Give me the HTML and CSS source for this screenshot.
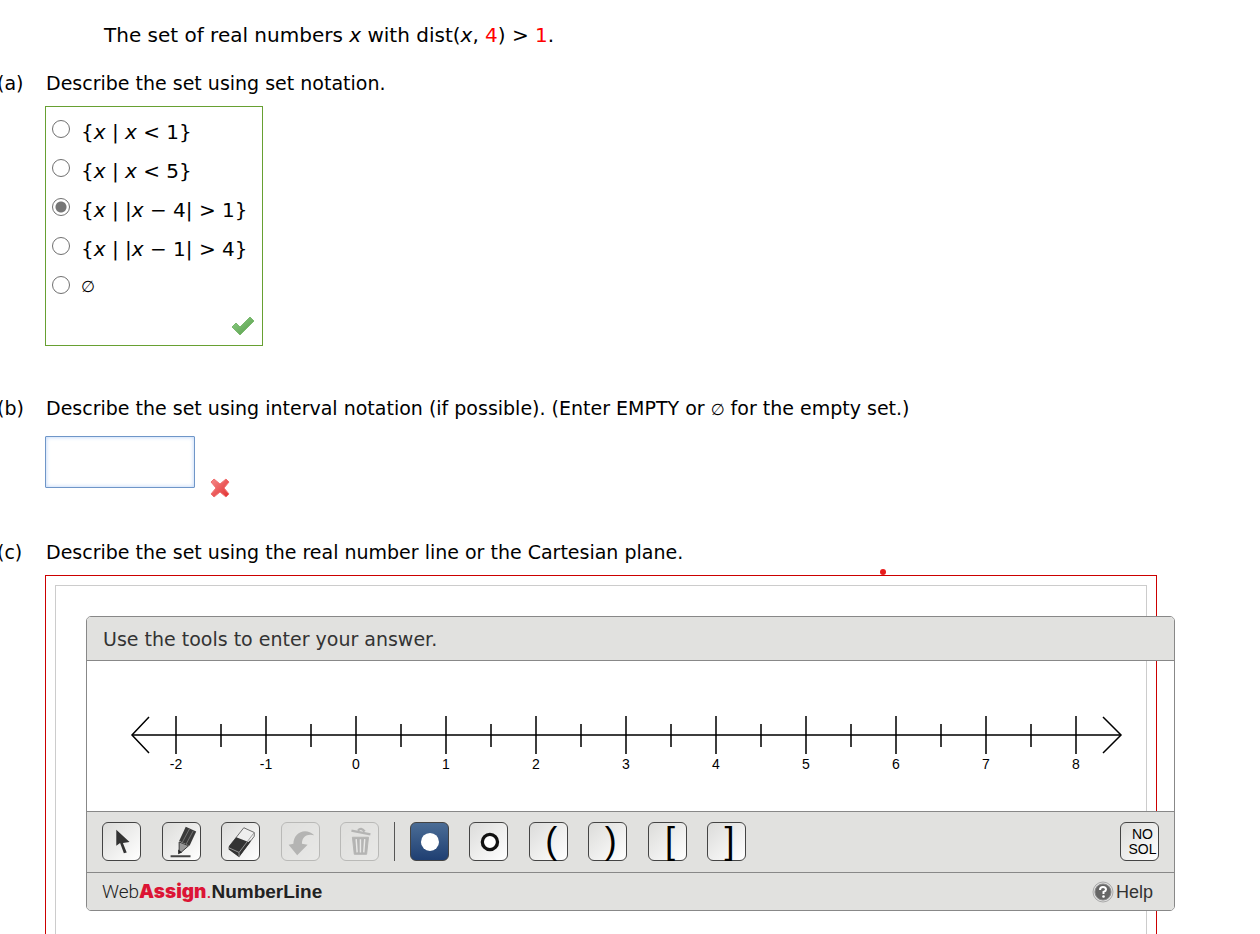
FILE: index.html
```html
<!DOCTYPE html>
<html lang="en">

<head>
    <meta charset="UTF-8">
    <title>WebAssign</title>
    <link rel="stylesheet" href="styles.css">
</head>

<body>
    <p class="intro">The set of real numbers <i>x</i> with dist(<i>x</i>, <span class="red">4</span>) &gt; <span class="red">1</span>.</p>

    <section class="part part-a">
        <span class="letter">(a)</span>
        <div class="content">
            <p id="askA">Describe the set using set notation.</p>
            <div class="choices" role="radiogroup" aria-labelledby="askA">
                <label><input type="radio" name="set"><span>{<i>x</i> | <i>x</i> &lt; 1}</span></label>
                <label><input type="radio" name="set"><span>{<i>x</i> | <i>x</i> &lt; 5}</span></label>
                <label><input type="radio" name="set" checked><span>{<i>x</i> | |<i>x</i> − 4| &gt; 1}</span></label>
                <label><input type="radio" name="set"><span>{<i>x</i> | |<i>x</i> − 1| &gt; 4}</span></label>
                <label class="empty"><input type="radio" name="set"><span class="null">∅</span></label>
                <svg class="check" width="24" height="20" viewBox="0 0 24 20">
                    <defs>
                        <linearGradient id="green" x1="0" y1="0" x2="1" y2="1">
                            <stop offset="0" stop-color="#8fd08a"/>
                            <stop offset="1" stop-color="#559a45"/>
                        </linearGradient>
                    </defs>
                    <path d="M1 11 L5 7 L9 11 L19 1 L23 5 L9 19 Z" fill="url(#green)" stroke="#7ab86e" stroke-linejoin="round"/>
                </svg>
            </div>
        </div>
    </section>

    <section class="part part-b">
        <span class="letter">(b)</span>
        <div class="content">
            <label for="interval">Describe the set using interval notation (if possible). (Enter EMPTY or <span class="null">∅</span> for the empty set.)</label>
            <div class="answer">
                <input type="text" id="interval">
                <svg width="20" height="20" viewBox="0 0 20 20">
                    <defs>
                        <linearGradient id="redfill" x1="0" y1="0" x2="1" y2="1">
                            <stop offset="0" stop-color="#f58a8a"/>
                            <stop offset="1" stop-color="#e23030"/>
                        </linearGradient>
                    </defs>
                    <path d="M4 1 L10 6 L16 1 L19 4 L14 10 L19 16 L16 19 L10 14 L4 19 L1 16 L6 10 L1 4 Z" fill="url(#redfill)" stroke="#f07070" stroke-linejoin="round"/>
                </svg>
            </div>
        </div>
    </section>

    <section class="part part-c">
        <span class="letter">(c)</span>
        <div class="content">
            <p>Describe the set using the real number line or the Cartesian plane.</p>
            <div class="wrong">
                <span class="dot"></span>
                <div class="frame">
                    <div class="numberline">
                        <div class="head">Use the tools to enter your answer.</div>
                        <svg class="graph" viewBox="0 0 1087 150">
                            <g stroke="#000" stroke-opacity="0.76" stroke-width="2" fill="none">
                                <path d="M45 74 H1034"/>
                                <path d="M89 55 V93 M179 55 V93 M269 55 V93 M359 55 V93 M449 55 V93 M539 55 V93 M629 55 V93 M719 55 V93 M809 55 V93 M899 55 V93 M989 55 V93"/>
                                <path d="M134 63 V86 M224 63 V86 M314 63 V86 M404 63 V86 M494 63 V86 M584 63 V86 M674 63 V86 M764 63 V86 M854 63 V86 M944 63 V86"/>
                            </g>
                            <path d="M62 56 L45 74 L62 92 M1016 56 L1034 74 L1016 92" stroke="#000" stroke-width="1.5" fill="none"/>
                            <g class="ticks">
                                <text x="89" y="108">-2</text>
                                <text x="179" y="108">-1</text>
                                <text x="269" y="108">0</text>
                                <text x="359" y="108">1</text>
                                <text x="449" y="108">2</text>
                                <text x="539" y="108">3</text>
                                <text x="629" y="108">4</text>
                                <text x="719" y="108">5</text>
                                <text x="809" y="108">6</text>
                                <text x="899" y="108">7</text>
                                <text x="989" y="108">8</text>
                            </g>
                        </svg>
                        <div class="tools">
                            <div class="group edit">
                                <button type="button" aria-label="Select">
                                    <svg viewBox="0 0 39 39"><path d="M14 7 V24 L18 21 L22 32 L25 31 L21 21 L28 20 Z" fill="#333"/></svg>
                                </button>
                                <button type="button" aria-label="Draw">
                                    <svg viewBox="0 0 39 39">
                                        <path d="M24 4 L35 9 L28 24 L17 19 Z" fill="#3a3a3a"/>
                                        <path d="M28 6 L20 21 M32 8 L24 23" stroke="#777" fill="none"/>
                                        <path d="M17 20 L27 24 L19 31 L17 30 Z" fill="#999" stroke="#333"/>
                                        <path d="M16 28 L20 31 L16 33 Z" fill="#222"/>
                                        <path d="M8 35 H29" stroke="#444" stroke-width="2"/>
                                    </svg>
                                </button>
                                <button type="button" aria-label="Erase">
                                    <svg viewBox="0 0 39 39">
                                        <path d="M23 5 L34 10 L34 14 L18 35 L8 27 L8 24 Z" fill="#eee" stroke="#666" stroke-linejoin="round"/>
                                        <path d="M15 15 L28 20 L30 18 L30 20 L18 36 L7 28 L7 25 Z" fill="#333"/>
                                        <path d="M7 26 L18 31 L34 10 M18 31 V36" stroke="#999" fill="none"/>
                                    </svg>
                                </button>
                                <button type="button" aria-label="Undo" disabled>
                                    <svg viewBox="0 0 39 39"><path d="M7 23 L12 22 C12 10 25 4 34 13 C27 11 21 14 21 22 L27 23 L16 34 Z" fill="#333"/></svg>
                                </button>
                                <button type="button" aria-label="Clear" disabled>
                                    <svg viewBox="0 0 39 39">
                                        <path d="M11 8 L31 12 M18 8 Q21 4 25 9" stroke="#333" stroke-width="2.5" fill="none"/>
                                        <path d="M12 15 H29 L27 33 H14 Z" fill="#333" stroke="#333"/>
                                        <path d="M16 17 L17 31 M20.500 17 V31 M25 17 L24 31" stroke="#fff" stroke-width="1.500" fill="none"/>
                                    </svg>
                                </button>
                            </div>
                            <span class="sep"></span>
                            <div class="group points">
                                <button type="button" class="on" aria-label="Closed point">
                                    <svg viewBox="0 0 39 39"><circle cx="20" cy="20" r="9.500" fill="#fff"/></svg>
                                </button>
                                <button type="button" aria-label="Open point">
                                    <svg viewBox="0 0 39 39"><circle cx="21" cy="20" r="8" fill="#fff" stroke="#111" stroke-width="3.500"/></svg>
                                </button>
                                <button type="button" class="sign">(</button>
                                <button type="button" class="sign">)</button>
                                <button type="button" class="sign">[</button>
                                <button type="button" class="sign">]</button>
                            </div>
                            <button type="button" class="nosol">NO<br>SOL</button>
                        </div>
                        <div class="foot">
                            <div class="logo"><span class="web">Web</span><span class="assign">Assign</span><span class="reg">.</span><span class="name">NumberLine</span></div>
                            <a class="help" href="#">
                                <svg width="22" height="22" viewBox="0 0 22 22">
                                    <circle cx="11" cy="11" r="10" fill="#ddd" stroke="#aaa"/>
                                    <circle cx="11" cy="11" r="8" fill="#666" stroke="#888"/>
                                    <path d="M8 9 Q8 6 11 6 Q14 6 14 8.500 Q14 10 11.500 11 V13" stroke="#fff" stroke-width="2" fill="none"/>
                                    <circle cx="11.500" cy="15.500" r="1.300" fill="#fff"/>
                                </svg>Help</a>
                        </div>
                    </div>
                </div>
            </div>
        </div>
    </section>
</body>

</html>
```
FILE: styles.css
```css
*
{
    box-sizing: border-box;
}

body
{
    margin: 0;
    padding: 23px 103px 0 0;
    min-height: 100vh;
    display: flex;
    flex-direction: column;
    background-color: white;
    color: black;
    font-family: "DejaVu Sans", Verdana, sans-serif;
    font-size: 19px;
    line-height: 24px;
}

p
{
    margin: 0;
}

.red
{
    color: red;
}

.intro
{
    margin: 0 0 24px 104px;
    font-size: 20px;
}

.part
{
    display: flex;
}

.letter
{
    flex: none;
    width: 48px;
    margin-left: -3px;
}

.content
{
    flex: 1;
}

.part .content > p, .part .content > label
{
    display: block;
    margin-left: 1px;
}

/* (a) */

.choices
{
    width: 218px;
    height: 240px;
    margin: 11px 0 50px;
    padding: 2px 7px 9px 6px;
    display: flex;
    flex-direction: column;
    border: 1px solid #67a032;
    font-size: 20px;
}

.choices label
{
    display: flex;
    align-items: center;
    gap: 11px;
    height: 39px;
    white-space: nowrap;
}

.choices label span
{
    padding-top: 7px;
}

.choices label.empty span
{
    padding-top: 4px;
}

.null
{
    font-size: 16px;
    line-height: 20px;
}

.choices input
{
    width: 18px;
    height: 18px;
    margin: 0;
    appearance: none;
    border: 1px solid #707070;
    border-radius: 50%;
}

.choices input:checked
{
    background: radial-gradient(#767676 0 5px, white 6px);
}

.check
{
    margin: auto 0 0 auto;
}

/* (b) */

.answer
{
    display: flex;
    align-items: flex-end;
    gap: 15px;
    margin: 16px 0 42px;
}

.answer input
{
    width: 150px;
    height: 52px;
    margin-bottom: 10px;
    border: 1px solid #6f96c8;
    border-radius: 1px;
    box-shadow: inset 0 0 4px #b4d0f8;
    font: inherit;
}

/* (c) */

.part-c, .part-c .content
{
    flex: 1;
}

.part-c .content
{
    display: flex;
    flex-direction: column;
}

.wrong
{
    flex: 1;
    display: flex;
    position: relative;
    margin-top: 11px;
    padding: 9px 9px 0;
    border: 1px solid #c00;
    border-bottom: 0;
}

.dot
{
    position: absolute;
    top: -7px;
    right: 270px;
    width: 6px;
    height: 6px;
    border-radius: 50%;
    background-color: #e81c1c;
}

.frame
{
    flex: 1;
    min-width: 0;
    padding: 30px 0 24px 30px;
    border: 1px solid #ccc;
    border-bottom: 0;
}

.numberline
{
    margin-right: -29px;
    position: relative;
    border: 1px solid #888;
    border-radius: 5px;
    overflow: hidden;
}

.head
{
    height: 44px;
    padding: 0 16px;
    line-height: 44px;
    color: #333;
    background-color: #e1e1df;
    border-bottom: 1px solid #888;
}

.graph
{
    display: block;
    width: 100%;
}

.ticks text
{
    font-family: "Liberation Sans", Arial, sans-serif;
    font-size: 14px;
    text-anchor: middle;
}

.tools
{
    display: flex;
    align-items: center;
    padding: 10px 15px 11px;
    background-color: #e1e1df;
    border-top: 1px solid #888;
    border-bottom: 1px solid #888;
}

.group
{
    display: flex;
    justify-content: space-between;
}

.edit
{
    width: 277px;
}

.points
{
    width: 336px;
}

.sep
{
    width: 1px;
    height: 39px;
    margin: 0 15px;
    background-color: #555;
}

button
{
    width: 39px;
    height: 39px;
    padding: 0;
    border: 1px solid #444;
    border-radius: 6px;
    background: linear-gradient(135deg, #dcdcda, #fff);
    color: black;
    font-family: "Liberation Sans", Arial, sans-serif;
}

button svg
{
    display: block;
    width: 37px;
    height: 37px;
}

button:disabled
{
    opacity: 0.25;
}

button.on
{
    background: linear-gradient(#4b6d96, #1f3f72);
}

button.sign
{
    padding: 0 0 2px 6px;
    font-size: 36px;
    line-height: 32px;
}

button.nosol
{
    margin-left: auto;
    padding-left: 6px;
    font-size: 14px;
    line-height: 15px;
}

.foot
{
    display: flex;
    justify-content: space-between;
    align-items: center;
    height: 37px;
    padding: 0 21px 0 15px;
    background-color: #e1e1df;
}

.logo
{
    font-family: Roboto, sans-serif;
    font-size: 19px;
    color: #222;
}

.web
{
    font-weight: 300;
}

.assign
{
    font-family: Inter, sans-serif;
    font-weight: 900;
    color: #dc1435;
}

.reg
{
    color: #dc1435;
}

.name
{
    font-family: "Liberation Sans", Arial, sans-serif;
    font-weight: 700;
}

.help
{
    display: flex;
    align-items: center;
    gap: 2px;
    color: #333;
    font-family: "Liberation Sans", Arial, sans-serif;
    font-size: 18px;
    text-decoration: none;
}
```
